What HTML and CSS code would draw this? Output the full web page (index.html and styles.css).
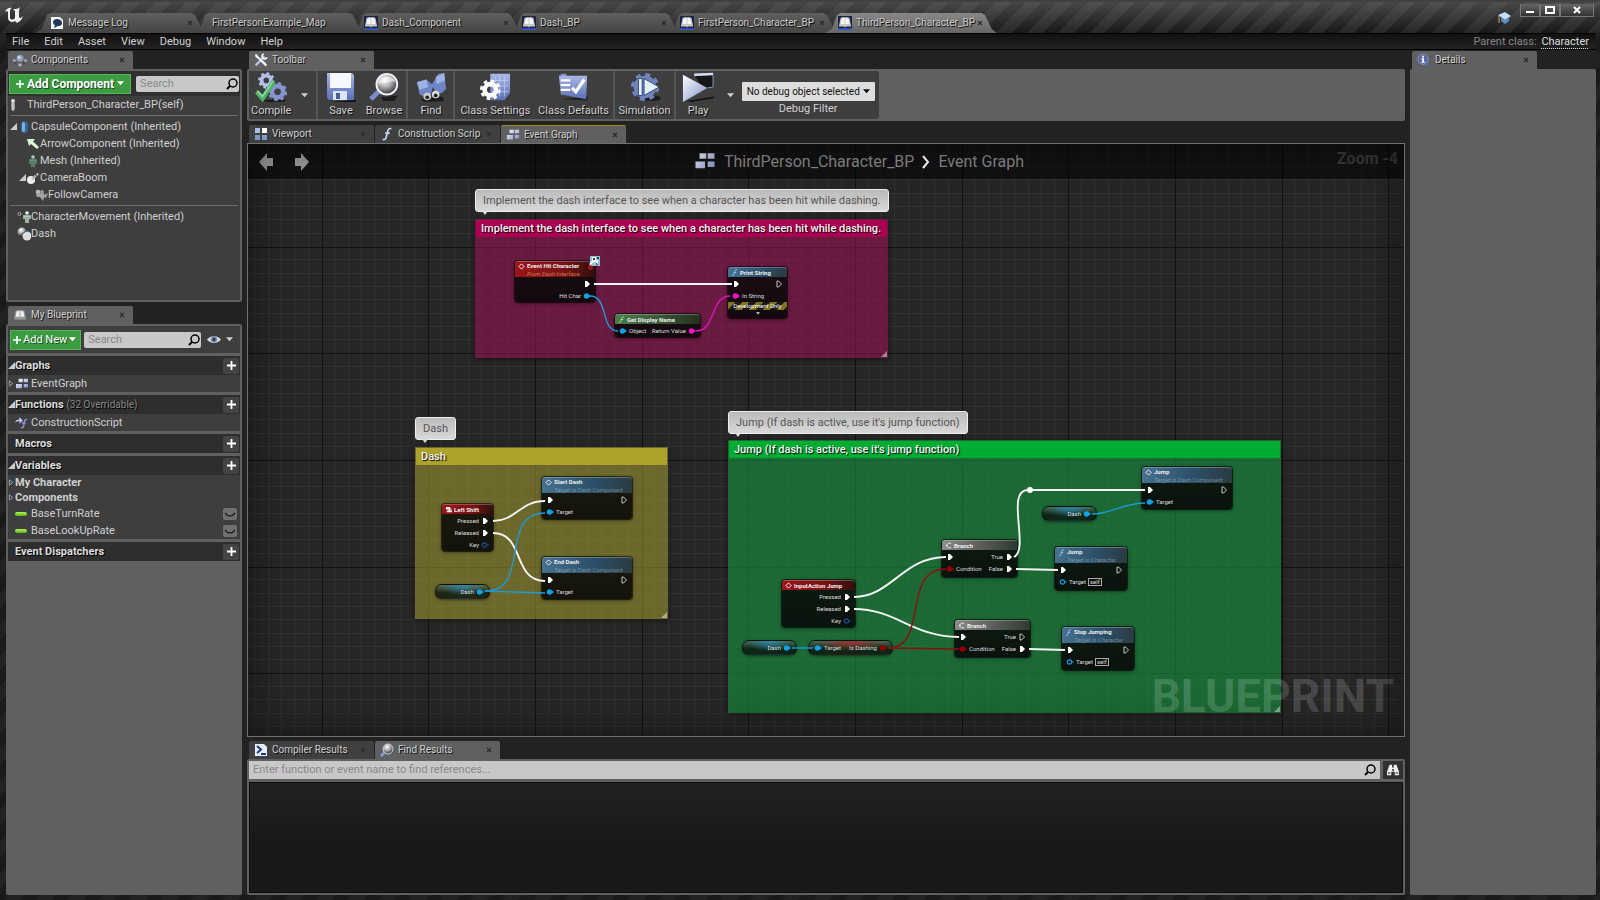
FILE: index.html
```html
<!DOCTYPE html>
<html lang="en">
<head>
    <meta charset="UTF-8">
    <meta name="viewport" content="width=device-width, initial-scale=1.0">
    <title>ThirdPerson_Character_BP</title>
    <link rel="stylesheet" href="styles.css">
</head>
<body>
    <!-- Icons -->
    <svg class="sprite" width="0" height="0" aria-hidden="true">
        <defs>
            <linearGradient id="steel" x1="0" y1="0" x2="1" y2="1"><stop offset="0" stop-color="#fff"/><stop offset="1" stop-color="#7d8dc8"/></linearGradient>
            <linearGradient id="blue" x1="0" y1="0" x2="0" y2="1"><stop offset="0" stop-color="#a9b8e6"/><stop offset="1" stop-color="#5a6fb5"/></linearGradient>
            <radialGradient id="ball" cx=".4" cy=".3" r=".7"><stop offset="0" stop-color="#fff"/><stop offset=".5" stop-color="#aaa"/><stop offset="1" stop-color="#333"/></radialGradient>
        </defs>
        <symbol id="i-unreal" viewBox="0 0 18 16"><path fill="#eee" d="M0 5C1 2 4 0 7 1 5 2 5 3 5 5V11C6 13 8 13 10 11V4L8 2C11 2 13 2 15 0 14 3 14 5 14 7V10C15 12 16 11 18 9 17 13 14 15 12 16L10 14C8 16 3 15 3 11V5C3 4 1 4 0 5Z"/></symbol>
        <symbol id="i-close" viewBox="0 0 8 8"><path d="M2 2L6 6M6 2L2 6" stroke="#2c2c2c" stroke-width="1.2"/></symbol>
        <symbol id="i-book" viewBox="0 0 16 16"><path fill="#1b2440" d="M0 0H16V16H0Z"/><path fill="#2e5ec4" d="M0 14H16V16H0Z"/><path fill="#c8c8c8" d="M1 12L3 2 7 1 8 2 9 1 13 2 15 12 9 12 8 13 7 12Z"/><path fill="#f4f4f4" d="M4 3L7.500 2V9L3 9ZM8.500 2L12 3 13 9 8.500 9Z"/></symbol>
        <symbol id="i-book2" viewBox="0 0 16 16"><path fill="#999" d="M1 13L3 3 7 2 8 3 9 2 13 3 15 13 9 13 8 14 7 13Z"/><path fill="#eee" d="M4 4L7.500 3V10L3 10ZM8.500 3L12 4 13 10 8.500 10Z"/></symbol>
        <symbol id="i-log" viewBox="0 0 14 14"><path fill="#f4f4f4" d="M1 1H10L13 4V13H1Z"/><path fill="#1d3a5c" d="M3 6C3 4 5 3 7 3S12 4 12 7 9 10 8 10L4 12 5 9C4 9 3 8 3 6Z"/></symbol>
        <symbol id="i-comps" viewBox="0 0 16 16"><circle cx="8" cy="6" r="4" fill="#8fa0b8"/><circle cx="7" cy="5" r="1.500" fill="#dde"/><path d="M1 10A8 5 0 0 0 15 10" stroke="#444c5c" stroke-width="2" fill="none" stroke-dasharray="3 2"/><path d="M0 7H3V10H0ZM13 7H16V10H13ZM6 12H10V15H6Z" fill="#aab"/></symbol>
        <symbol id="i-tools" viewBox="0 0 16 16"><path d="M2 14L12 4" stroke="#b9c4f0" stroke-width="2.800"/><path fill="#f4f4f4" d="M1 2L3 1 5 4 13 11 15 14 13 15 11 13 4 6 2 5Z"/><path fill="none" stroke="#f0f0f0" stroke-width="2" d="M15 5A3 3 0 1 1 11 1"/></symbol>
        <symbol id="i-mag" viewBox="0 0 12 12"><circle cx="7" cy="5" r="4" fill="none" stroke="#000" stroke-width="1.500"/><path d="M4 8L1 11" stroke="#000" stroke-width="2"/></symbol>
        <symbol id="i-plus" viewBox="0 0 10 10"><path fill="#fff" d="M4 0H6V4H10V6H6V10H4V6H0V4H4Z"/></symbol>
        <symbol id="i-down" viewBox="0 0 8 5"><path fill="currentColor" d="M0 0H8L4 4.500Z"/></symbol>
        <symbol id="i-open" viewBox="0 0 7 7"><path fill="#ccc" d="M7 0V7H0Z"/></symbol>
        <symbol id="i-shut" viewBox="0 0 7 8"><path fill="none" stroke="#aaa" d="M1 1V7L5 4Z"/></symbol>
        <symbol id="i-self" viewBox="0 0 14 14"><circle cx="7" cy="3" r="2" fill="#ddd"/><path d="M5 5H9V10L8 13H6L5 10Z" fill="#999"/><path d="M7 5V12" stroke="#eee"/></symbol>
        <symbol id="i-capsule" viewBox="0 0 14 14"><rect x="4" y="1" width="7" height="12" rx="3.500" fill="#31659c"/><rect x="5" y="2" width="3" height="10" rx="1.500" fill="#79b0e2"/></symbol>
        <symbol id="i-arrow" viewBox="0 0 14 14"><path fill="#d9f5d4" d="M1 2L9 2 7 4.500 13 10 11 12 5 7 3 9Z"/></symbol>
        <symbol id="i-mesh" viewBox="0 0 14 14"><circle cx="7" cy="3" r="1.800" fill="#a9cdb6"/><path fill="none" stroke="#6d9c80" stroke-width="1.300" d="M4 10V6H10V10M6 6V13M8 6V13"/></symbol>
        <symbol id="i-boom" viewBox="0 0 14 14"><circle cx="5" cy="9" r="4" fill="#ececec"/><path d="M6 8L13 2" stroke="#bbb" stroke-width="2.500" stroke-dasharray="2 1"/></symbol>
        <symbol id="i-cam" viewBox="0 0 14 14"><circle cx="4" cy="4" r="2.300" fill="#bbb"/><circle cx="8" cy="4" r="2" fill="#999"/><path fill="#a4a4a4" d="M2 6L10 5 10 7 14 5 12 10 10 9 9 13 6 9 3 9Z"/></symbol>
        <symbol id="i-move" viewBox="0 0 14 14"><circle cx="2.500" cy="4" r="1.500" fill="none" stroke="#aaa"/><circle cx="10" cy="3" r="1.800" fill="#e2f5e8"/><path fill="none" stroke="#b7d8c2" stroke-width="1.500" d="M7 9V6H13V9M9 6V13M11 6V13"/></symbol>
        <symbol id="i-dash" viewBox="0 0 14 14"><circle cx="5" cy="5" r="4.500" fill="url(#ball)"/><circle cx="10" cy="9" r="4.500" fill="#ddd"/><path d="M3 9L9 4" stroke="#444"/></symbol>
        <symbol id="i-graph" viewBox="0 0 16 14"><path fill="url(#steel)" d="M4 1H9V5H4ZM10 1H15V5H10ZM1 7H8V12H1ZM10 7H15V11H10Z"/></symbol>
        <symbol id="i-grid" viewBox="0 0 14 14"><path fill="#a9c0e6" d="M1 1H6V6H1Z"/><path fill="#fff" d="M8 1H13V6H8Z"/><path fill="#7f9ac9" d="M1 8H6V13H1ZM8 8H13V13H8Z"/></symbol>
        <symbol id="i-func" viewBox="0 0 12 16"><path fill="none" stroke="#cfd6ff" stroke-width="1.800" d="M11 2C8 1 7 3 6.500 6L5 12C4.500 14 3 15 1 14M4 7H9"/></symbol>
        <symbol id="i-cons" viewBox="0 0 16 14"><path fill="#bfc8f0" d="M0 7C1 3 3 3 5 3V0L9 4 5 8V5C3 5 1 5 0 7Z"/><path fill="none" stroke="#8b9ade" stroke-width="1.600" d="M14 3C12 2 11 4 10.500 7L10 10C9.500 13 8 13 7 12M8 7H12"/></symbol>
        <symbol id="i-console" viewBox="0 0 14 14"><path fill="#e8eefc" d="M1 1H10L13 4V13H1Z"/><path fill="none" stroke="#1d3a80" stroke-width="2" d="M3 3L7 6.500 3 10M7 11H12"/></symbol>
        <symbol id="i-find" viewBox="0 0 14 14"><path d="M5 9L1 13" stroke="#8b9ade" stroke-width="2.500"/><circle cx="8" cy="6" r="5" fill="url(#ball)" stroke="#c8cde0"/></symbol>
        <symbol id="i-info" viewBox="0 0 16 16"><path d="M10 10L14 15" stroke="#5264b5" stroke-width="2.500"/><circle cx="7" cy="7" r="6" fill="#5b6a9e" stroke="#8794cc"/><path fill="#fff" d="M6 3H8V5H6ZM5 6H8V10H9V11H5V10H6V7H5Z"/></symbol>
        <symbol id="i-eye" viewBox="0 0 14 9"><path fill="#d4d8e0" d="M0 4.500C3 0 11 0 14 4.500 11 9 3 9 0 4.500Z"/><circle cx="7" cy="4.500" r="3" fill="#6e7ea8"/><circle cx="7" cy="4.500" r="1.300" fill="#222"/></symbol>
        <symbol id="i-lid" viewBox="0 0 14 12"><rect width="14" height="12" rx="2" fill="#707070"/><path fill="none" stroke="#1d1d1d" stroke-width="1.300" d="M2 5C5 9 9 9 12 5"/></symbol>
        <symbol id="i-cap" viewBox="0 0 14 14"><path fill="#c3def5" d="M1 4L8 1 14 5 8 9Z"/><path fill="#5b8fd0" d="M4 7L8 9 12 7V10L8 13 4 10Z"/><path d="M2 5V12" stroke="#c9a668"/></symbol>
        <symbol id="i-bino" viewBox="0 0 16 14"><path fill="#eee" d="M4 1H7V4H9V1H12L15 9V13H10V9H6V13H1V9Z"/><path fill="#111" d="M7 6H9V8H7ZM2 10H5V11H2ZM11 10H14V11H11Z"/></symbol>
        <symbol id="i-back" viewBox="0 0 16 20"><path fill="#999" d="M1 10L9 1V6H15V14H9V19Z"/></symbol>

        <symbol id="t-compile" viewBox="0 0 34 32"><path d="M8 30L33 29 31 32 12 32Z" fill="#1c1c1c"/><circle cx="12" cy="9" r="5" fill="none" stroke="#b4c0ea" stroke-width="4"/><circle cx="12" cy="9" r="7.500" fill="none" stroke="#b4c0ea" stroke-width="2.500" stroke-dasharray="3 2.890"/><circle cx="24" cy="21" r="6" fill="none" stroke="#8494cc" stroke-width="5"/><circle cx="24" cy="21" r="9" fill="none" stroke="#8494cc" stroke-width="2.500" stroke-dasharray="3.500 3.570"/><path fill="none" stroke="#4fb26b" stroke-width="5" d="M2 21L8 28 20 10"/><path fill="none" stroke="#93dba5" stroke-width="1.500" d="M2 20L8 26 19 10"/></symbol>
        <symbol id="t-save" viewBox="0 0 32 32"><path d="M5 31H31V29Z" fill="#111"/><path fill="url(#blue)" d="M2 2H27L29 4V29H4L2 27Z"/><path fill="#f6f8ff" d="M5 2H26V17H5Z"/><path fill="#dce4fa" d="M8 20H22V29H8Z"/><path fill="#4a5c9c" d="M11 22H15V28H11Z"/></symbol>
        <symbol id="t-browse" viewBox="0 0 34 32"><path d="M14 27L32 25 28 31 16 31Z" fill="#1c1c1c"/><path d="M12 20L3 29" stroke="#7b8ccb" stroke-width="5"/><circle cx="20" cy="13" r="11" fill="url(#ball)" stroke="#f1f3fb" stroke-width="2"/><path fill="#fff" opacity=".5" d="M10 12C11 4 27 2 30 11 24 8 16 14 10 12Z"/></symbol>
        <symbol id="t-find" viewBox="0 0 34 32"><path d="M6 29L29 26 31 31 10 32Z" fill="#1c1c1c"/><path fill="#6f86c6" d="M2 11L12 8 18 13 25 2 31 1 33 18 28 23 21 20 19 16 17 24 12 27 5 24Z"/><path fill="#9fb2e6" d="M2 11L12 8 14 16 5 19ZM22 5L31 1 32 9 23 13Z"/><circle cx="13" cy="26" r="4" fill="#ccc"/><circle cx="22" cy="24" r="4" fill="#ddd"/><circle cx="13" cy="27" r="2" fill="#222"/><circle cx="22" cy="25" r="2" fill="#222"/></symbol>
        <symbol id="t-settings" viewBox="0 0 34 32"><path fill="url(#blue)" d="M12 2H33V22L27 30H12Z"/><path d="M17 5V26M22 5V26M27 5V26M13 9H31M13 15H31M13 21H31" stroke="#dbe5ff" opacity=".6"/><circle cx="12" cy="19" r="6" fill="none" stroke="#fff" stroke-width="5"/><circle cx="12" cy="19" r="9.500" fill="none" stroke="#fff" stroke-width="3" stroke-dasharray="3.800 3.660"/></symbol>
        <symbol id="t-defaults" viewBox="0 0 34 32"><path d="M5 29L32 30 33 26Z" fill="#1c1c1c"/><path fill="#8795cf" d="M4 2H10V5H4Z"/><path fill="url(#blue)" d="M2 4H32L31 29 4 24Z"/><path d="M4 9H14M4 14H14M4 19H14" stroke="#fff" stroke-width="2.500"/><path fill="none" stroke="#fff" stroke-width="3.500" d="M16 17L20 21 29 8"/></symbol>
        <symbol id="t-sim" viewBox="0 0 34 32"><ellipse cx="24" cy="28" rx="10" ry="3" fill="#1c1c1c"/><circle cx="17" cy="16" r="12" fill="#7183bd"/><circle cx="17" cy="16" r="13" fill="none" stroke="#7183bd" stroke-width="4" stroke-dasharray="5.200 5"/><path fill="#e3f0ff" stroke="#30446e" d="M10 7H14V25H10ZM16 7L32 16 16 25Z"/></symbol>
        <symbol id="t-play" viewBox="0 0 34 32"><path fill="#161616" d="M14 4L33 2V16L22 18ZM4 31L34 26V28L10 32Z"/><path fill="none" stroke="#8fa0bd" d="M13 4L33 3V16L27 17"/><path stroke="#d3dcf0" stroke-width="2.500" d="M13 3L33 2"/><path fill="url(#steel)" d="M1 3L27 17 1 32Z"/></symbol>

        <!-- Pins -->
        <symbol id="p-exec" viewBox="0 0 8 8"><path fill="#fff" d="M2 1H4L7 4 4 7H2Z"/></symbol>
        <symbol id="p-exec-off" viewBox="0 0 8 8"><path fill="none" stroke="#ddd" stroke-width=".9" d="M2 1H3.500L6.500 4 3.500 7H2Z"/></symbol>
        <symbol id="p-data" viewBox="0 0 8 8"><circle cx="3.500" cy="4" r="2.700" fill="currentColor"/><path fill="currentColor" d="M6 2.500L8 4 6 5.500Z"/></symbol>
        <symbol id="p-data-off" viewBox="0 0 8 8"><circle cx="3.500" cy="4" r="2.200" fill="none" stroke="currentColor" stroke-width="1.200"/><path fill="currentColor" d="M6.500 3L8 4 6.500 5Z"/></symbol>
        <symbol id="p-event" viewBox="0 0 8 8"><path fill="none" stroke="#fff" d="M4 1L7 4 4 7 1 4Z"/></symbol>
        <symbol id="p-func" viewBox="0 0 8 8"><path fill="none" stroke="#8fd0ff" d="M7 1C5 0 4.500 2 4 4S3 8 1 7M3 4H6"/></symbol>
        <symbol id="p-pure" viewBox="0 0 8 8"><path fill="none" stroke="#9fe79c" d="M7 1C5 0 4.500 2 4 4S3 8 1 7M3 4H6"/></symbol>
        <symbol id="p-branch" viewBox="0 0 8 8"><path fill="none" stroke="#eee" d="M7 1.500H4L1 4 4 6.500H7M1 4H3"/></symbol>
        <symbol id="p-key" viewBox="0 0 8 8"><path fill="#eee" d="M1 1H6V3H8V4H6V5H8V7H2V5H4V4H1Z"/></symbol>
    </svg>

    <div class="window">
        <!-- Title bar with the document tabs -->
        <header class="titlebar">
            <svg class="logo"><use href="#i-unreal"/></svg>
            <nav class="doc-tabs">
                <div class="doc-tab"><svg class="icon"><use href="#i-log"/></svg><span>Message Log</span><button class="close" aria-label="Close"><svg><use href="#i-close"/></svg></button></div>
                <div class="doc-tab"><span>FirstPersonExample_Map</span></div>
                <div class="doc-tab"><svg class="icon"><use href="#i-book"/></svg><span>Dash_Component</span><button class="close" aria-label="Close"><svg><use href="#i-close"/></svg></button></div>
                <div class="doc-tab"><svg class="icon"><use href="#i-book"/></svg><span>Dash_BP</span><button class="close" aria-label="Close"><svg><use href="#i-close"/></svg></button></div>
                <div class="doc-tab"><svg class="icon"><use href="#i-book"/></svg><span>FirstPerson_Character_BP</span><button class="close" aria-label="Close"><svg><use href="#i-close"/></svg></button></div>
                <div class="doc-tab active"><svg class="icon"><use href="#i-book"/></svg><span>ThirdPerson_Character_BP</span><button class="close" aria-label="Close"><svg><use href="#i-close"/></svg></button></div>
            </nav>
            <svg class="tutorial"><use href="#i-cap"/></svg>
            <div class="window-buttons">
                <button aria-label="Minimize"><svg viewBox="0 0 12 10"><path fill="#fff" d="M2 6H10V8H2Z"/></svg></button>
                <button aria-label="Maximize"><svg viewBox="0 0 12 10"><path fill="none" stroke="#fff" stroke-width="2" d="M2 2H10V8H2Z"/></svg></button>
                <button class="wide" aria-label="Close"><svg viewBox="0 0 12 10"><path stroke="#fff" stroke-width="2" d="M3 2L9 8M9 2L3 8"/></svg></button>
            </div>
        </header>

        <div class="menubar">
            <button>File</button>
            <button>Edit</button>
            <button>Asset</button>
            <button>View</button>
            <button>Debug</button>
            <button>Window</button>
            <button>Help</button>
            <div class="parent-class">Parent class: <a href="#">Character</a></div>
        </div>

        <div class="workspace">
            <!-- Left column -->
            <aside class="left">
                <section class="dock components">
                    <div class="tabs"><div class="tab active"><svg class="icon"><use href="#i-comps"/></svg><span>Components</span><button class="close" aria-label="Close"><svg><use href="#i-close"/></svg></button></div></div>
                    <div class="panel dark">
                        <div class="row-tools">
                            <button class="green big"><svg class="plus"><use href="#i-plus"/></svg>Add Component<svg class="down"><use href="#i-down"/></svg></button>
                            <div class="search"><input type="text" placeholder="Search" aria-label="Search components"><svg><use href="#i-mag"/></svg></div>
                        </div>
                        <ul class="tree">
                            <li class="self"><svg class="icon"><use href="#i-self"/></svg>ThirdPerson_Character_BP(self)</li>
                            <li class="line"></li>
                            <li><svg class="twist"><use href="#i-open"/></svg><svg class="icon"><use href="#i-capsule"/></svg>CapsuleComponent (Inherited)</li>
                            <li class="lv1"><svg class="icon"><use href="#i-arrow"/></svg>ArrowComponent (Inherited)</li>
                            <li class="lv1"><svg class="icon"><use href="#i-mesh"/></svg>Mesh (Inherited)</li>
                            <li class="lv1 parent"><svg class="twist"><use href="#i-open"/></svg><svg class="icon"><use href="#i-boom"/></svg>CameraBoom</li>
                            <li class="lv2"><svg class="icon"><use href="#i-cam"/></svg>FollowCamera</li>
                            <li class="line"></li>
                            <li class="lv0"><svg class="icon"><use href="#i-move"/></svg>CharacterMovement (Inherited)</li>
                            <li class="lv0"><svg class="icon"><use href="#i-dash"/></svg>Dash</li>
                        </ul>
                    </div>
                </section>

                <section class="dock blueprint">
                    <div class="tabs"><div class="tab active"><svg class="icon"><use href="#i-book2"/></svg><span>My Blueprint</span><button class="close" aria-label="Close"><svg><use href="#i-close"/></svg></button></div></div>
                    <div class="panel">
                        <div class="row-tools dark">
                            <button class="green"><svg class="plus"><use href="#i-plus"/></svg>Add New<svg class="down"><use href="#i-down"/></svg></button>
                            <div class="search"><input type="text" placeholder="Search" aria-label="Search blueprint"><svg><use href="#i-mag"/></svg></div>
                            <button class="view-options" aria-label="View options"><svg class="eye"><use href="#i-eye"/></svg><svg class="down"><use href="#i-down"/></svg></button>
                        </div>
                        <div class="group">
                            <div class="group-head"><svg class="twist"><use href="#i-open"/></svg><span>Graphs</span><button aria-label="Add graph"><svg><use href="#i-plus"/></svg></button></div>
                            <div class="item"><svg class="twist"><use href="#i-shut"/></svg><svg class="icon"><use href="#i-graph"/></svg>EventGraph</div>
                        </div>
                        <div class="group">
                            <div class="group-head"><svg class="twist"><use href="#i-open"/></svg><span>Functions <small>(32 Overridable)</small></span><button aria-label="Add function"><svg><use href="#i-plus"/></svg></button></div>
                            <div class="item"><i class="twist"></i><svg class="icon"><use href="#i-cons"/></svg>ConstructionScript</div>
                        </div>
                        <div class="group">
                            <div class="group-head"><i class="twist"></i><span>Macros</span><button aria-label="Add macro"><svg><use href="#i-plus"/></svg></button></div>
                        </div>
                        <div class="group">
                            <div class="group-head"><svg class="twist"><use href="#i-open"/></svg><span>Variables</span><button aria-label="Add variable"><svg><use href="#i-plus"/></svg></button></div>
                            <div class="category"><svg class="twist"><use href="#i-shut"/></svg>My Character</div>
                            <div class="category"><svg class="twist"><use href="#i-shut"/></svg>Components</div>
                            <div class="item variable"><i class="twist"></i><i class="float"></i>BaseTurnRate<svg class="lid"><use href="#i-lid"/></svg></div>
                            <div class="item variable"><i class="twist"></i><i class="float"></i>BaseLookUpRate<svg class="lid"><use href="#i-lid"/></svg></div>
                        </div>
                        <div class="group">
                            <div class="group-head"><i class="twist"></i><span>Event Dispatchers</span><button aria-label="Add event dispatcher"><svg><use href="#i-plus"/></svg></button></div>
                        </div>
                    </div>
                </section>
            </aside>

            <!-- Middle column -->
            <main class="center">
                <section class="dock">
                    <div class="tabs"><div class="tab active"><svg class="icon"><use href="#i-tools"/></svg><span>Toolbar</span><button class="close" aria-label="Close"><svg><use href="#i-close"/></svg></button></div></div>
                    <div class="panel toolbar-panel">
                        <div class="toolbar">
                            <button class="tool"><svg><use href="#t-compile"/></svg>Compile</button>
                            <button class="tool-more" aria-label="Compile options"><svg class="down"><use href="#i-down"/></svg></button>
                            <span class="sep"></span>
                            <button class="tool"><svg><use href="#t-save"/></svg>Save</button>
                            <button class="tool"><svg><use href="#t-browse"/></svg>Browse</button>
                            <span class="sep"></span>
                            <button class="tool"><svg><use href="#t-find"/></svg>Find</button>
                            <span class="sep"></span>
                            <button class="tool wide"><svg><use href="#t-settings"/></svg>Class Settings</button>
                            <button class="tool wide"><svg><use href="#t-defaults"/></svg>Class Defaults</button>
                            <span class="sep"></span>
                            <button class="tool"><svg><use href="#t-sim"/></svg>Simulation</button>
                            <span class="sep"></span>
                            <button class="tool"><svg><use href="#t-play"/></svg>Play</button>
                            <button class="tool-more" aria-label="Play options"><svg class="down"><use href="#i-down"/></svg></button>
                            <div class="debug">
                                <div class="combo">
                                    <select id="debugFilter"><option>No debug object selected</option></select>
                                    <svg class="down"><use href="#i-down"/></svg>
                                </div>
                                <label for="debugFilter">Debug Filter</label>
                            </div>
                        </div>
                    </div>
                </section>

                <section class="dock graph-dock">
                    <div class="tabs">
                        <div class="tab"><svg class="icon"><use href="#i-grid"/></svg><span>Viewport</span><button class="close" aria-label="Close"><svg><use href="#i-close"/></svg></button></div>
                        <div class="tab"><svg class="icon"><use href="#i-func"/></svg><span>Construction Scrip</span><button class="close" aria-label="Close"><svg><use href="#i-close"/></svg></button></div>
                        <div class="tab active current"><svg class="icon"><use href="#i-graph"/></svg><span>Event Graph</span><button class="close" aria-label="Close"><svg><use href="#i-close"/></svg></button></div>
                    </div>
                    <div class="graph">
                        <svg class="grid" width="100%" height="100%">
                            <defs>
                                <pattern id="gridlines" x="73" y="102" width="320" height="320" patternUnits="userSpaceOnUse">
                                    <path class="minor" d="M13 0V320M27 0V320M40 0V320M53 0V320M67 0V320M80 0V320M93 0V320M120 0V320M133 0V320M147 0V320M160 0V320M173 0V320M187 0V320M200 0V320M227 0V320M240 0V320M253 0V320M267 0V320M280 0V320M293 0V320M307 0V320"/>
                                    <path class="minor" d="M0 13H320M0 27H320M0 40H320M0 53H320M0 67H320M0 80H320M0 93H320M0 120H320M0 133H320M0 147H320M0 160H320M0 173H320M0 187H320M0 200H320M0 227H320M0 240H320M0 253H320M0 267H320M0 280H320M0 293H320M0 307H320"/>
                                    <path class="major" d="M1 0V320M107 0V320M214 0V320M0 1H320M0 107H320M0 214H320"/>
                                </pattern>
                            </defs>
                            <rect width="100%" height="100%" fill="url(#gridlines)"/>
                        </svg>

                        <!-- Comment boxes -->
                        <div class="comment hit"><h3>Implement the dash interface to see when a character has been hit while dashing.</h3></div>
                        <div class="bubble hit-bubble">Implement the dash interface to see when a character has been hit while dashing.</div>
                        <div class="comment dash"><h3>Dash</h3></div>
                        <div class="bubble dash-bubble">Dash</div>
                        <div class="comment jump"><h3>Jump (If dash is active, use it's jump function)</h3></div>
                        <div class="bubble jump-bubble">Jump (If dash is active, use it's jump function)</div>

                        <!-- Nodes -->
                        <div class="node two-line event n-hit">
                            <div class="head"><svg><use href="#p-event"/></svg><b>Event Hit Character</b><em>From Dash Interface</em></div>
                            <div class="pins"><i></i><span><svg><use href="#p-exec"/></svg></span></div>
                            <div class="pins"><i></i><span>Hit Char<svg class="obj"><use href="#p-data"/></svg></span></div>
                            <svg class="interface-badge" viewBox="0 0 12 14"><path fill="#8fc1d9" d="M2 0H12V10H2Z"/><path fill="#fff" d="M4 1H8V4H10V9H8L6 6 2 9 1 8 4 5Z"/><path fill="#26455c" d="M5 2H7V4H5ZM9 1H11V3H9ZM7 6L10 8 9 10Z"/><path fill="#500" stroke="#d22" d="M1 10H4V13H1Z"/></svg>
                        </div>
                        <div class="node func n-print">
                            <div class="head"><svg><use href="#p-func"/></svg><b>Print String</b></div>
                            <div class="pins"><span><svg><use href="#p-exec"/></svg></span><span><svg><use href="#p-exec-off"/></svg></span></div>
                            <div class="pins"><span><svg class="str"><use href="#p-data"/></svg>In String</span></div>
                            <div class="dev-only">Development Only</div>
                            <svg class="expand"><use href="#i-down"/></svg>
                        </div>
                        <div class="node pure n-name">
                            <div class="head"><svg><use href="#p-pure"/></svg><b>Get Display Name</b></div>
                            <div class="pins"><span><svg class="obj"><use href="#p-data"/></svg>Object</span><span>Return Value<svg class="str"><use href="#p-data"/></svg></span></div>
                        </div>

                        <div class="node event n-shift">
                            <div class="head"><svg><use href="#p-key"/></svg><b>Left Shift</b></div>
                            <div class="pins"><i></i><span>Pressed<svg><use href="#p-exec"/></svg></span></div>
                            <div class="pins"><i></i><span>Released<svg><use href="#p-exec"/></svg></span></div>
                            <div class="pins"><i></i><span>Key<svg class="key"><use href="#p-data-off"/></svg></span></div>
                        </div>
                        <div class="node two-line func n-start">
                            <div class="head"><svg><use href="#p-event"/></svg><b>Start Dash</b><em>Target is Dash Component</em></div>
                            <div class="pins"><span><svg><use href="#p-exec"/></svg></span><span><svg><use href="#p-exec-off"/></svg></span></div>
                            <div class="pins"><span><svg class="obj"><use href="#p-data"/></svg>Target</span></div>
                        </div>
                        <div class="node two-line func n-end">
                            <div class="head"><svg><use href="#p-event"/></svg><b>End Dash</b><em>Target is Dash Component</em></div>
                            <div class="pins"><span><svg><use href="#p-exec"/></svg></span><span><svg><use href="#p-exec-off"/></svg></span></div>
                            <div class="pins"><span><svg class="obj"><use href="#p-data"/></svg>Target</span></div>
                        </div>
                        <div class="pill v-dash1"><i></i><span>Dash<svg class="obj"><use href="#p-data"/></svg></span></div>

                        <div class="node event n-input">
                            <div class="head"><svg><use href="#p-event"/></svg><b>InputAction Jump</b></div>
                            <div class="pins"><i></i><span>Pressed<svg><use href="#p-exec"/></svg></span></div>
                            <div class="pins"><i></i><span>Released<svg><use href="#p-exec"/></svg></span></div>
                            <div class="pins"><i></i><span>Key<svg class="key"><use href="#p-data-off"/></svg></span></div>
                        </div>
                        <div class="node branch n-branch1">
                            <div class="head"><svg><use href="#p-branch"/></svg><b>Branch</b></div>
                            <div class="pins"><span><svg><use href="#p-exec"/></svg></span><span>True<svg><use href="#p-exec"/></svg></span></div>
                            <div class="pins"><span><svg class="bool"><use href="#p-data"/></svg>Condition</span><span>False<svg><use href="#p-exec"/></svg></span></div>
                        </div>
                        <div class="node branch n-branch2">
                            <div class="head"><svg><use href="#p-branch"/></svg><b>Branch</b></div>
                            <div class="pins"><span><svg><use href="#p-exec"/></svg></span><span>True<svg><use href="#p-exec-off"/></svg></span></div>
                            <div class="pins"><span><svg class="bool"><use href="#p-data"/></svg>Condition</span><span>False<svg><use href="#p-exec"/></svg></span></div>
                        </div>
                        <div class="node two-line func n-jumpdash">
                            <div class="head"><svg><use href="#p-event"/></svg><b>Jump</b><em>Target is Dash Component</em></div>
                            <div class="pins"><span><svg><use href="#p-exec"/></svg></span><span><svg><use href="#p-exec-off"/></svg></span></div>
                            <div class="pins"><span><svg class="obj"><use href="#p-data"/></svg>Target</span></div>
                        </div>
                        <div class="node two-line func n-jump">
                            <div class="head"><svg><use href="#p-func"/></svg><b>Jump</b><em>Target is Character</em></div>
                            <div class="pins"><span><svg><use href="#p-exec"/></svg></span><span><svg><use href="#p-exec-off"/></svg></span></div>
                            <div class="pins"><span><svg class="obj"><use href="#p-data-off"/></svg>Target<u>self</u></span></div>
                        </div>
                        <div class="node two-line func n-stop">
                            <div class="head"><svg><use href="#p-func"/></svg><b>Stop Jumping</b><em>Target is Character</em></div>
                            <div class="pins"><span><svg><use href="#p-exec"/></svg></span><span><svg><use href="#p-exec-off"/></svg></span></div>
                            <div class="pins"><span><svg class="obj"><use href="#p-data-off"/></svg>Target<u>self</u></span></div>
                        </div>
                        <div class="pill v-dash2"><i></i><span>Dash<svg class="obj"><use href="#p-data"/></svg></span></div>
                        <div class="pill v-dash3"><i></i><span>Dash<svg class="obj"><use href="#p-data"/></svg></span></div>
                        <div class="pill red v-dashing"><span><svg class="obj"><use href="#p-data"/></svg>Target</span><span>Is Dashing<svg class="bool"><use href="#p-data"/></svg></span></div>

                        <!-- Wires -->
                        <svg class="wires" width="100%" height="100%">
                            <g class="w-exec" stroke-width="1.9">
                                <path d="M346 140H484"/>
                                <path d="M245 377C268 377 272 357 297 357"/>
                                <path d="M245 389C277 389 264 437 297 437"/>
                                <path d="M606 453C643 453 655 413 698 413"/>
                                <path d="M606 465C648 465 665 493 711 493"/>
                                <path d="M766 413C782 405 757 346 780 346H897"/>
                                <path d="M768 425L810 426"/>
                                <path d="M781 505L817 506"/>
                            </g>
                            <g class="w-obj" stroke-width="1.4">
                                <path d="M342 152C361 152 352 187 370 187"/>
                                <path d="M237 447C284 447 250 369 297 369"/>
                                <path d="M237 447L297 449"/>
                                <path d="M544 504H565"/>
                                <path d="M844 370C862 370 876 359 897 359"/>
                            </g>
                            <g class="w-str" stroke-width="1.4"><path d="M448 187C468 187 462 152 482 152"/></g>
                            <g class="w-bool" stroke-width="1.4">
                                <path d="M640 504C682 504 652 425 698 425"/>
                                <path d="M640 504L711 505"/>
                            </g>
                            <circle cx="782" cy="346" r="3" fill="#fff"/>
                        </svg>

                        <div class="watermark">BLUEPRINT</div>

                        <div class="graph-head">
                            <button aria-label="Back"><svg><use href="#i-back"/></svg></button>
                            <button class="forward" aria-label="Forward"><svg><use href="#i-back"/></svg></button>
                            <div class="breadcrumb">
                                <svg class="icon"><use href="#i-graph"/></svg>
                                <a href="#">ThirdPerson_Character_BP</a>
                                <svg class="chevron" viewBox="0 0 8 14"><path fill="none" stroke="#fff" stroke-width="2" d="M1 1L6 7 1 13"/></svg>
                                <span>Event Graph</span>
                            </div>
                            <div class="zoom">Zoom -4</div>
                        </div>
                    </div>
                </section>

                <section class="dock results">
                    <div class="tabs">
                        <div class="tab"><svg class="icon"><use href="#i-console"/></svg><span>Compiler Results</span><button class="close" aria-label="Close"><svg><use href="#i-close"/></svg></button></div>
                        <div class="tab active"><svg class="icon"><use href="#i-find"/></svg><span>Find Results</span><button class="close" aria-label="Close"><svg><use href="#i-close"/></svg></button></div>
                    </div>
                    <div class="panel">
                        <div class="find-row">
                            <div class="search"><input type="text" placeholder="Enter function or event name to find references..." aria-label="Find references"><svg><use href="#i-mag"/></svg></div>
                            <button class="find-all" aria-label="Find in all blueprints"><svg><use href="#i-bino"/></svg></button>
                        </div>
                        <div class="result-list"></div>
                    </div>
                </section>
            </main>

            <!-- Right column -->
            <aside class="right">
                <section class="dock details">
                    <div class="tabs"><div class="tab active"><svg class="icon"><use href="#i-info"/></svg><span>Details</span><button class="close" aria-label="Close"><svg><use href="#i-close"/></svg></button></div></div>
                    <div class="panel"></div>
                </section>
            </aside>
        </div>
    </div>
</body>
</html>
```

FILE: styles.css
```css
* {
    box-sizing: border-box;
}

body {
    margin: 0;
    height: 100vh;
    font-family: Roboto, "Liberation Sans", sans-serif;
    font-size: 11px;
    line-height: 16px;
    color: #d0d0d0;
    background-color: #222;
    overflow: hidden;
}

button {
    font: inherit;
    color: inherit;
    background: none;
    border: none;
    padding: 0;
    cursor: pointer;
}

svg {
    flex: none;
    display: block;
}

.sprite {
    position: absolute;
}

.window {
    height: 100%;
    display: flex;
    flex-direction: column;
    padding: 0 4px 5px 6px;
    border-top: 2px solid #3c4240;
    background: repeating-linear-gradient(135deg, #222 0 11px, #1a1a1a 11px 22px);
}

/* Title bar */
.titlebar {
    height: 31px;
    display: flex;
    align-items: flex-end;
    margin: 0 -4px 0 -6px;
    padding-left: 5px;
    background: linear-gradient(rgba(90, 90, 90, 0.7), rgba(20, 20, 20, 0.5)), repeating-linear-gradient(135deg, #3a3a3a 0 11px, #1c1c1c 11px 22px);
}

.logo {
    width: 18px;
    height: 16px;
    align-self: flex-start;
    margin-top: 5px;
}

.doc-tabs {
    flex: 1;
    display: flex;
    min-width: 0;
    padding-left: 12px;
}

.doc-tab {
    width: 172px;
    height: 20px;
    margin-right: -14px;
    padding: 0 13px;
    display: flex;
    align-items: center;
    font-size: 10px;
    color: #ccc;
    text-shadow: 1px 1px 1px #000;
    background: linear-gradient(#606060, #444);
    clip-path: polygon(0 100%, 4% 80%, 7% 10%, 9% 0, 91% 0, 93% 10%, 97% 80%, 100% 100%);
}

.doc-tab:nth-child(2) {
    padding-left: 19px;
}

.doc-tab:first-child .icon {
    margin-left: 2px;
}

.doc-tab.active {
    background: linear-gradient(#888, #666);
}

.doc-tab span,
.tab span {
    flex: 1;
    overflow: hidden;
    white-space: nowrap;
}

.doc-tab .icon {
    width: 14px;
    height: 14px;
    margin-right: 4px;
}

.close,
.close svg {
    width: 8px;
    height: 8px;
}

.tutorial {
    width: 14px;
    height: 14px;
    align-self: center;
    margin-right: 9px;
}

.window-buttons {
    display: flex;
    align-self: flex-start;
    margin: 2px 6px 0 0;
}

.window-buttons button {
    width: 20px;
    height: 13px;
    border: 1px solid #777;
    border-top: none;
    background: linear-gradient(#666, #333);
    display: flex;
    align-items: center;
    justify-content: center;
}

.window-buttons .wide {
    width: 34px;
}

.window-buttons svg {
    width: 12px;
    height: 10px;
}

/* Menu */
.menubar {
    height: 17px;
    display: flex;
    align-items: center;
    gap: 15px;
    padding: 0 7px 0 6px;
    background: linear-gradient(#111, #222);
    border-top: 1px solid #000;
    border-bottom: 1px solid #000;
}

.parent-class {
    margin-left: auto;
    color: #888;
}

.parent-class a {
    color: #ddd;
    margin-left: 2px;
    text-decoration: underline dotted;
    text-underline-offset: 3px;
}

/* Docked panels */
.workspace {
    flex: 1;
    display: flex;
    gap: 5px;
    min-height: 0;
    background-color: #222;
}

.left {
    width: 236px;
    display: flex;
    flex-direction: column;
    gap: 3px;
}

.center {
    flex: 1;
    min-width: 0;
    display: flex;
    flex-direction: column;
    gap: 3px;
}

.right {
    width: 186px;
    display: flex;
}

.dock {
    display: flex;
    flex-direction: column;
}

.blueprint,
.graph-dock,
.details {
    flex: 1;
    min-height: 0;
}

.tabs {
    display: flex;
    gap: 1px;
    padding: 1px 2px 0;
}

.tab {
    width: 125px;
    height: 18px;
    display: flex;
    align-items: center;
    padding: 0 7px 0 5px;
    font-size: 10px;
    background: #404040;
    border-radius: 2px 2px 0 0;
    text-shadow: 1px 1px 0 #111;
}

.tab.active {
    background: #606060;
}

.tab.current {
    border-top: 1px solid #a08a1c;
}

.tab .icon {
    width: 14px;
    height: 14px;
    margin-right: 4px;
}

.panel {
    flex: 1;
    background: #606060;
    border: 2px solid #606060;
    border-radius: 2px;
}

.panel.dark,
.row-tools.dark {
    background: #3e3e3e;
}

.components {
    height: 252px;
}

.row-tools {
    display: flex;
    align-items: center;
    gap: 3px;
    height: 27px;
    padding: 0 2px;
}

.components .row-tools {
    height: 25px;
    padding: 0 1px;
    gap: 5px;
    background: #2f2f2f;
}

.green {
    height: 20px;
    padding: 0 4px 0 2px;
    display: flex;
    align-items: center;
    gap: 2px;
    background: #3c9c42;
    border: 1px solid #57b35b;
    color: #fff;
    white-space: nowrap;
    text-shadow: 1px 1px 0 #1c4a1f;
}

.green.big {
    font-size: 12px;
    font-weight: bold;
    gap: 3px;
    padding: 0 6px;
}

.plus {
    width: 8px;
    height: 8px;
}

.down {
    width: 7px;
    height: 5px;
}

.search {
    flex: 1;
    min-width: 0;
    height: 16px;
    display: flex;
    align-items: center;
    padding: 0 1px 0 4px;
    background: #c8c8c8;
    border-radius: 2px;
}

.search input {
    flex: 1;
    min-width: 0;
    padding: 0;
    border: none;
    outline: none;
    background: none;
    font: inherit;
    color: #111;
}

.search input::placeholder {
    color: #888;
}

.search svg {
    width: 12px;
    height: 12px;
}

/* Component tree */
.tree {
    list-style: none;
    margin: 0;
    padding: 0 2px;
}

.tree li {
    height: 17px;
    display: flex;
    align-items: center;
    white-space: nowrap;
}

.tree .icon {
    width: 14px;
    height: 14px;
}

.tree .twist {
    width: 7px;
    height: 7px;
}

.tree .self {
    gap: 7px;
    margin-left: -4px;
}

.tree .line {
    height: 1px;
    margin: 2px 0;
    background: #707070;
}

.tree .lv0 {
    padding-left: 7px;
}

.tree .lv1 {
    padding-left: 16px;
}

.tree .parent {
    padding-left: 9px;
}

.tree .lv2 {
    padding-left: 24px;
}

/* My Blueprint */
.view-options {
    display: flex;
    align-items: center;
    gap: 5px;
    padding: 0 5px 0 3px;
}

.eye {
    width: 14px;
    height: 9px;
}

.group {
    margin-top: 3px;
    background: #3e3e3e;
    white-space: nowrap;
}

.group-head {
    height: 19px;
    display: flex;
    align-items: center;
    background: #2e2e2e;
    font-weight: bold;
    color: #ddd;
    text-shadow: 1px 1px 0 #000;
}

.group-head span {
    flex: 1;
}

.group-head small {
    font-size: 10px;
    font-weight: normal;
    color: #888;
}

.group-head button {
    width: 16px;
    height: 16px;
    margin-right: 1px;
    background: #444;
    border-radius: 2px;
    display: flex;
    align-items: center;
    justify-content: center;
}

.group-head button svg {
    width: 9px;
    height: 9px;
}

.group .twist {
    width: 7px;
    height: 7px;
}

.item {
    height: 17px;
    display: flex;
    align-items: center;
}

.item .icon {
    width: 14px;
    height: 12px;
    margin-right: 2px;
}

.category {
    height: 15px;
    display: flex;
    align-items: center;
    font-weight: bold;
}

.float {
    width: 12px;
    height: 4px;
    margin-right: 4px;
    border-radius: 2px;
    background: linear-gradient(#b6f55a, #5ab014);
}

.lid {
    width: 14px;
    height: 12px;
    margin: 0 3px 0 auto;
}

/* Toolbar */
.toolbar-panel {
    height: 52px;
}

.toolbar {
    display: inline-flex;
    height: 48px;
    padding-right: 4px;
    background: #3e3e3e;
    border-radius: 0 3px 3px 0;
}

.tool {
    min-width: 43px;
    padding: 0 2px;
    display: flex;
    flex-direction: column;
    align-items: center;
    white-space: nowrap;
    text-shadow: 1px 1px 0 #111;
}

.tool.wide {
    min-width: 78px;
}

.tool svg {
    width: 32px;
    height: 32px;
}

.tool-more {
    width: 22px;
    display: flex;
    align-items: center;
    justify-content: center;
}

.sep {
    width: 2px;
    margin: 0 1px;
    background: #555;
}

.debug {
    display: flex;
    flex-direction: column;
    align-items: center;
    padding-top: 11px;
}

.combo {
    position: relative;
    color: #111;
}

.combo select {
    appearance: none;
    height: 19px;
    padding: 0 14px 0 5px;
    border: none;
    border-radius: 1px;
    background: #ddd;
    color: #111;
    font: inherit;
    font-size: 10px;
}

.combo .down {
    position: absolute;
    right: 5px;
    top: 7px;
}

/* Graph */
.graph {
    flex: 1;
    min-height: 0;
    position: relative;
    overflow: hidden;
    border: 1px solid #707070;
    background: #262626;
}

.grid,
.wires {
    position: absolute;
    left: 0;
    top: 0;
}

.minor {
    stroke: #313131;
    shape-rendering: crispEdges;
    stroke-width: 1px;
}

.major {
    stroke: #121212;
    stroke-width: 1px;
    shape-rendering: crispEdges;
}

.graph::after {
    content: "";
    position: absolute;
    inset: 0;
    box-shadow: inset 0 0 40px rgba(0, 0, 0, 0.5);
    pointer-events: none;
}

.graph-head {
    position: absolute;
    left: 0;
    right: 0;
    top: 0;
    height: 35px;
    padding-left: 10px;
    display: flex;
    align-items: center;
    gap: 20px;
    background: rgba(0, 0, 0, 0.55);
}

.graph-head button svg {
    width: 16px;
    height: 20px;
}

.graph-head .forward svg {
    transform: scaleX(-1);
}

.breadcrumb {
    flex: 1;
    display: flex;
    align-items: center;
    justify-content: center;
    gap: 8px;
    padding-right: 16px;
    font-size: 16px;
    color: #888;
}

.breadcrumb a {
    color: inherit;
    text-decoration: none;
}

.breadcrumb .icon {
    width: 22px;
    height: 19px;
}

.chevron {
    width: 8px;
    height: 14px;
}

.zoom {
    position: absolute;
    right: 6px;
    top: 7px;
    font-size: 16px;
    font-weight: bold;
    color: #383838;
}

.watermark {
    position: absolute;
    right: 10px;
    bottom: 14px;
    font-size: 46px;
    line-height: 52px;
    font-weight: bold;
    color: rgba(255, 255, 255, 0.17);
}

.comment {
    position: absolute;
    background: rgba(160, 16, 88, 0.55);
    box-shadow: 0 1px 5px rgba(0, 0, 0, 0.5);
}

.comment::after {
    content: "";
    position: absolute;
    right: 1px;
    bottom: 1px;
    border: 3px solid transparent;
    border-right-color: rgba(255, 255, 255, 0.45);
    border-bottom-color: rgba(255, 255, 255, 0.45);
}

.comment h3 {
    margin: 1px;
    padding: 0 5px;
    font-size: 11px;
    font-weight: 500;
    line-height: 17px;
    white-space: nowrap;
    color: #f4f4f4;
    background: #ac0052;
    text-shadow: 1px 1px 1px #000;
}

.comment.dash {
    background: rgba(166, 158, 50, 0.55);
}

.comment.dash h3 {
    background: #aca22c;
}

.comment.jump {
    background: rgba(22, 150, 64, 0.6);
}

.comment.jump h3 {
    background: #00ac32;
}

.bubble {
    position: absolute;
    height: 23px;
    padding: 0 7px;
    line-height: 21px;
    border: 1px solid #eee;
    border-radius: 3px;
    background: linear-gradient(#bbb, #d8d8d8);
    color: #555;
    white-space: nowrap;
}

.bubble::after {
    content: "";
    position: absolute;
    left: 6px;
    top: 100%;
    border: 3px solid transparent;
    border-top: 4px solid #ddd;
}

.hit { left: 227px; top: 75px; width: 413px; height: 139px; }
.hit-bubble { left: 227px; top: 45px; }
.dash { left: 167px; top: 303px; width: 253px; height: 172px; }
.dash-bubble { left: 167px; top: 273px; }
.jump { left: 480px; top: 296px; width: 553px; height: 273px; }
.jump-bubble { left: 480px; top: 267px; }

.node {
    position: absolute;
    border-radius: 3px;
    background: linear-gradient(rgba(8, 8, 8, 0.8), rgba(8, 8, 8, 0.9));
    box-shadow: 0 0 0 1px rgba(0, 0, 0, 0.55), 0 1px 4px rgba(0, 0, 0, 0.6);
    font-size: 6px;
    line-height: 8px;
    color: #ddd;
    white-space: nowrap;
}

.head {
    height: 10px;
    margin-bottom: 1px;
    padding-left: 3px;
    display: grid;
    grid-template-columns: 8px 1fr;
    column-gap: 1px;
    align-items: center;
    border-radius: 3px 3px 0 0;
    border-top: 1px solid rgba(255, 255, 255, 0.25);
    color: #eee;
}

.two-line .head {
    height: 16px;
}

.head svg,
.pins svg,
.pill svg {
    width: 8px;
    height: 8px;
}

.head svg {
    width: 7px;
    height: 7px;
}

.head em {
    grid-column: 2;
    line-height: 7px;
    color: rgba(190, 205, 210, 0.5);
}

.event .head {
    background: linear-gradient(90deg, #9c1519, #781114 60%, #30100f);
}

.event .head em {
    color: #cf7a50;
}

.func .head {
    background: linear-gradient(100deg, #47728f, #2c506b 55%, #2b3a3f);
}

.pure .head {
    background: linear-gradient(90deg, #4c7c4b, #3a5a39 50%, #24301f);
}

.branch .head {
    background: linear-gradient(90deg, #8c8c8c, #666 40%, #2d3a30);
}

.pins {
    height: 12px;
    padding: 0 4px;
    display: flex;
    align-items: center;
    justify-content: space-between;
}

.pins span,
.pill span {
    display: flex;
    align-items: center;
    gap: 2px;
}

.pins u {
    padding: 0 1px;
    border: 1px solid #aaa;
    line-height: 6px;
    text-decoration: none;
}

.obj { color: #12a0e8; }
.str { color: #f010c8; }
.bool { color: #950000; }
.key { color: #1c4a9c; }

.dev-only {
    height: 8px;
    text-align: center;
    color: #fff;
    background: repeating-linear-gradient(135deg, #7c7420 0 5px, #1c1814 5px 10px);
}

.expand {
    width: 4px;
    height: 3px;
    margin: 2px auto;
}

.interface-badge {
    position: absolute;
    right: -5px;
    top: -5px;
    width: 12px;
    height: 14px;
}

.pill {
    position: absolute;
    width: 55px;
    height: 15px;
    padding: 0 5px;
    display: flex;
    align-items: center;
    justify-content: space-between;
    border: 1px solid rgba(0, 0, 0, 0.6);
    border-radius: 7px;
    background: radial-gradient(ellipse at 50% 0, rgba(40, 140, 190, 0.8), transparent 60%), linear-gradient(rgba(90, 110, 95, 0.7), rgba(10, 20, 14, 0.8) 60%);
    box-shadow: 0 1px 3px rgba(0, 0, 0, 0.5);
    font-size: 6px;
    color: #ddd;
    white-space: nowrap;
}

.pill.red {
    width: 85px;
    background: radial-gradient(ellipse at 50% 0, rgba(170, 40, 40, 0.8), transparent 60%), linear-gradient(rgba(90, 110, 95, 0.7), rgba(10, 20, 14, 0.8) 60%);
}

.n-hit { left: 267px; top: 117px; width: 80px; height: 41px; }
.n-print { left: 480px; top: 123px; width: 59px; height: 51px; }
.n-name { left: 367px; top: 170px; width: 85px; height: 23px; }
.n-shift { left: 194px; top: 360px; width: 51px; height: 47px; }
.n-start { left: 294px; top: 333px; width: 90px; height: 42px; }
.n-end { left: 294px; top: 413px; width: 90px; height: 42px; }
.n-input { left: 534px; top: 436px; width: 73px; height: 47px; }
.n-branch1 { left: 694px; top: 396px; width: 75px; height: 37px; }
.n-branch2 { left: 707px; top: 476px; width: 75px; height: 37px; }
.n-jumpdash { left: 894px; top: 323px; width: 90px; height: 42px; }
.n-jump { left: 807px; top: 403px; width: 72px; height: 43px; }
.n-stop { left: 814px; top: 483px; width: 72px; height: 43px; }
.v-dash1 { left: 187px; top: 440px; }
.v-dash2 { left: 794px; top: 362px; }
.v-dash3 { left: 494px; top: 496px; }
.v-dashing { left: 560px; top: 496px; }

.wires {
    fill: none;
    pointer-events: none;
}

.w-exec { stroke: #f4f4f4; }
.w-obj { stroke: #1e9ad6; }
.w-str { stroke: #e010c0; }
.w-bool { stroke: #8c1010; }

/* Find results */
.results {
    height: 155px;
}

.find-row {
    display: flex;
    gap: 3px;
    height: 18px;
}

.find-row .search {
    height: 18px;
    border-radius: 0;
    padding-right: 4px;
}

.find-all {
    width: 20px;
    background: #303030;
    display: flex;
    align-items: center;
    justify-content: center;
}

.find-all svg {
    width: 14px;
    height: 12px;
}

.results .panel {
    display: flex;
    flex-direction: column;
    gap: 3px;
}

.result-list {
    flex: 1;
    background: linear-gradient(#222, #191919 50%);
    border: 1px solid #0c0c0c;
}
```
